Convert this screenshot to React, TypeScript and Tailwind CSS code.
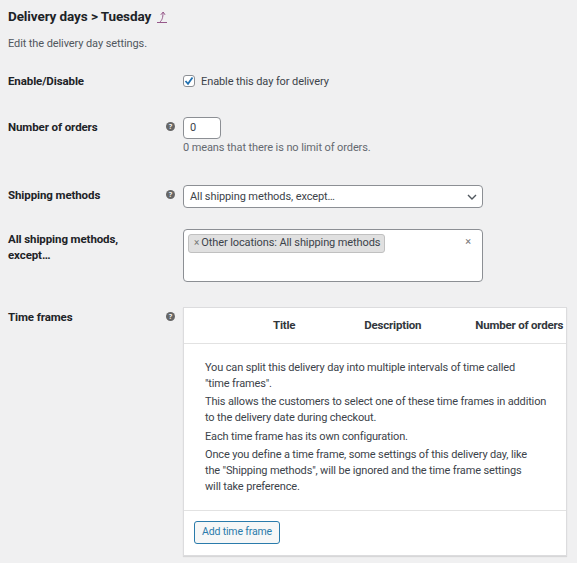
import React from "react";

function Help() {
  return (
    <svg width="9" height="9" viewBox="0 0 20 20" className="shrink-0">
      <circle cx="10" cy="10" r="10" fill="#666" />
      <text x="10" y="16" textAnchor="middle" fontSize="16" fontWeight="700" fill="#f0f0f1" fontFamily="'Noto Sans', sans-serif">?</text>
    </svg>
  );
}

function Row({ label, help, className, children }: { label: React.ReactNode; help?: boolean; className?: string; children: React.ReactNode }) {
  return (
    <div className={"flex items-start " + (className ?? "")}>
      <div className="w-[158px] shrink-0 font-bold text-[#1d2327] text-[11.5px] leading-[16px]">{label}</div>
      <div className="w-[17px] shrink-0">
        {help && <span className="mt-[3px] block"><Help /></span>}
      </div>
      <div className="flex-1 min-w-0">{children}</div>
    </div>
  );
}

const para: React.ReactNode[] = [
  <>You can split this delivery day into multiple intervals of time called<br />"time frames".</>,
  <>This allows the customers to select one of these time frames in addition<br />to the delivery date during checkout.</>,
  <>Each time frame has its own configuration.</>,
  <>Once you define a time frame, some settings of this delivery day, like<br />the "Shipping methods", will be ignored and the time frame settings<br />will take preference.</>,
];

export default function App() {
  return (
    <div className="w-[577px] h-[563px] overflow-hidden bg-[#f0f0f1] pl-[8px] text-[#3c434a] text-[11px] tracking-[-0.1px] leading-[16px] font-['Roboto',sans-serif]">
      <div className="pt-[7px] flex items-center h-[24px] text-[#1d2327]">
        <h2 className="text-[13.5px] font-bold leading-[18px]">Delivery days &gt; Tuesday</h2>
        <svg width="12" height="14" viewBox="0 0 12 14" className="ml-[5px] mt-[2px]" fill="none" stroke="#96588a" strokeWidth="1">
          <path d="M1 12.5H11M4 12C6 10 7 8 7 2.5M4.8 4.8L7.2 2L9 4.8" />
        </svg>
      </div>
      <p className="mt-[12px] text-[#50575e] text-[11px]">Edit the delivery day settings.</p>

      <Row label="Enable/Disable" className="mt-[21px]">
        <label className="flex items-center gap-[6px] h-[16px]">
          <span className="w-[12px] h-[12px] bg-white border border-[#8c8f94] rounded-[3px] flex items-center justify-center">
            <svg width="10" height="10" viewBox="0 0 10 10" fill="none" stroke="#2271b1" strokeWidth="1.8"><path d="M1.5 5L4 7.8L8.5 1.5" /></svg>
          </span>
          <span className="pt-[1px]">Enable this day for delivery</span>
        </label>
      </Row>

      <Row label="Number of orders" help className="mt-[30px]">
        <div className="w-[38px] h-[22px] -mt-[2px] bg-white border border-[#8c8f94] rounded-[4px] pl-[6px] flex items-center">0</div>
        <p className="mt-[1px] text-[#646970]">0 means that there is no limit of orders.</p>
      </Row>

      <Row label="Shipping methods" help className="mt-[31px]">
        <div className="w-[300px] h-[23px] -mt-[2px] bg-white border border-[#8c8f94] rounded-[4px] pl-[6px] pr-[5px] flex items-center justify-between">
          <span>All shipping methods, except…</span>
          <svg width="10" height="10" viewBox="0 0 10 10" fill="none" stroke="#50575e" strokeWidth="1.4"><path d="M1 3L5 7L9 3" /></svg>
        </div>
      </Row>

      <Row label={<>All shipping methods,<br />except…</>} className="mt-[23px]">
        <div className="w-[300px] h-[53px] -mt-[2px] bg-white border border-[#8c8f94] rounded-[4px] pl-[4px] pr-[11px] pt-[4px] flex items-start justify-between">
          <span className="h-[19px] w-[197px] flex items-center pl-[5px] pb-[1px] bg-[#e0e0e0] border border-[#c0c0c0] rounded-[3px] whitespace-nowrap">
            <span className="text-[#777] text-[10px] mr-[2px]">×</span>Other locations: All shipping methods
          </span>
          <span className="text-[#777] leading-[16px]">×</span>
        </div>
      </Row>

      <Row label="Time frames" help className="mt-[27px]">
        <div className="w-[384px] -mt-[2px] bg-white border border-[#dcdcde] shadow-[0_1px_1px_rgba(0,0,0,0.1)]">
          <div className="flex h-[36px] pb-[1px] items-center font-bold text-[11.5px] tracking-[-0.2px] text-[#32373c] border-b border-[#e2e2e2] whitespace-nowrap">
            <span className="ml-[89px]">Title</span>
            <span className="ml-[69px]">Description</span>
            <span className="ml-[54px]">Number of orders</span>
          </div>
          <div className="pl-[21px] pr-[20px] pt-[15.5px] pb-[14.5px] whitespace-nowrap tracking-[-0.15px]">
            {para.map((t, i) => (
              <p key={i} className="mt-[2.5px] first:mt-0">{t}</p>
            ))}
          </div>
          <div className="border-t border-[#e2e2e2] px-[10px] pt-[10px] pb-[11px]">
            <button className="h-[23px] w-[86px] bg-[#f6f7f7] border border-[#2a7bab] rounded-[3px] text-[#2a7bab] text-[10.5px] tracking-[-0.15px]">Add time frame</button>
          </div>
        </div>
      </Row>
    </div>
  );
}
